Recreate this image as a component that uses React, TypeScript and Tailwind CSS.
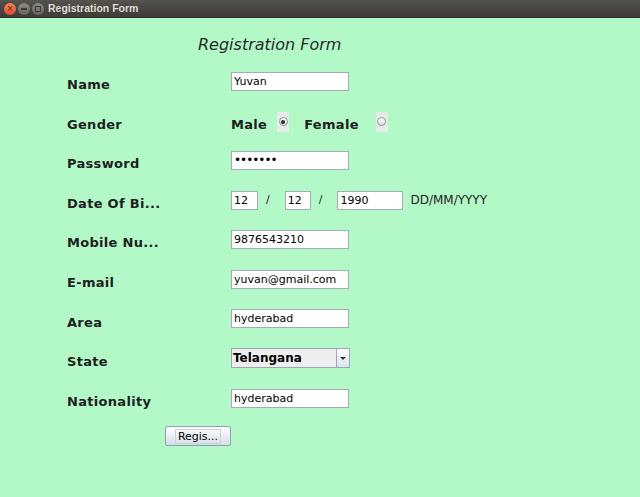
import React from 'react';

const fieldCls =
  'h-[19px] border border-[#a3adb8] bg-white pl-[2px] text-[11px] leading-[17px] text-black';

function Field({ value, w = 'w-[118px]' }: { value: string; w?: string }) {
  return <div className={`${fieldCls} ${w}`}>{value}</div>;
}

function Radio({ checked }: { checked?: boolean }) {
  return (
    <div className="mb-[5px] flex h-[20px] w-[12px] items-center justify-center bg-[#e4ece6]">
      <div className="flex h-[9px] w-[9px] items-center justify-center rounded-full border border-[#8f959c] bg-gradient-to-b from-white to-[#d8dde2]">
        {checked && <div className="h-[4px] w-[4px] rounded-full bg-[#2b2b2b]" />}
      </div>
    </div>
  );
}

function Row({
  label,
  raise = true,
  children,
}: {
  label: string;
  raise?: boolean;
  children: React.ReactNode;
}) {
  return (
    <div className="flex h-[39.6px] items-center">
      <div className="w-[231px] shrink-0 pl-[67px] pt-[2px] text-[13px] font-bold tracking-[0.3px] text-[#1e1e1e]">
        {label}
      </div>
      <div className={raise ? 'mb-[5px] flex items-center' : 'flex items-center pt-[2px]'}>{children}</div>
    </div>
  );
}

export default function App() {
  return (
    <div
      className="flex h-[497px] w-[640px] flex-col overflow-hidden bg-[#b3f9c8]"
      style={{ fontFamily: '"DejaVu Sans", "Liberation Sans", sans-serif' }}
    >
      {/* window title bar */}
      <div className="flex h-[18px] items-center border-b border-[#2e2d2a] bg-gradient-to-b from-[#55534e] to-[#3c3b37]">
        <div className="ml-[4px] flex items-center gap-[2px]">
          <div className="flex h-[12px] w-[12px] items-center justify-center rounded-full bg-gradient-to-b from-[#f7845a] to-[#e0492a] text-[8px] leading-none text-[#5a2010]">
            ×
          </div>
          <div className="flex h-[12px] w-[12px] items-center justify-center rounded-full bg-gradient-to-b from-[#8d8b85] to-[#66645f]">
            <div className="h-[2px] w-[6px] bg-[#3c3b37]" />
          </div>
          <div className="flex h-[12px] w-[12px] items-center justify-center rounded-full bg-gradient-to-b from-[#8d8b85] to-[#66645f]">
            <div className="h-[6px] w-[6px] border border-[#3c3b37]" />
          </div>
        </div>
        <div className="ml-[4px] font-['Liberation_Sans',sans-serif] text-[10.5px] font-bold text-[#dfdbd2]">
          Registration Form
        </div>
      </div>

      <div className="h-[46px] pl-[198px] pt-[18px] text-[16px] italic leading-[18px] text-[#2a2a2a]">
        Registration Form
      </div>

      <div className="flex flex-col">
        <Row label="Name">
          <Field value="Yuvan" />
        </Row>
        <Row label="Gender" raise={false}>
          <span className="text-[13px] font-bold tracking-[0.3px] text-[#1e1e1e]">Male</span>
          <div className="ml-[10px]">
            <Radio checked />
          </div>
          <span className="ml-[15px] text-[13px] font-bold tracking-[0.3px] text-[#1e1e1e]">Female</span>
          <div className="ml-[17px]">
            <Radio />
          </div>
        </Row>
        <Row label="Password">
          <div className={`${fieldCls} w-[118px] text-[12px] tracking-[-1px]`}>•••••••</div>
        </Row>
        <Row label="Date Of Bi...">
          <Field value="12" w="w-[27px]" />
          <span className="ml-[8px] text-[11px] text-[#222]">/</span>
          <div className="ml-[15px]">
            <Field value="12" w="w-[26px]" />
          </div>
          <span className="ml-[8px] text-[11px] text-[#222]">/</span>
          <div className="ml-[15px]">
            <Field value="1990" w="w-[66px]" />
          </div>
          <span className="ml-[7px] text-[12px] text-[#222]">DD/MM/YYYY</span>
        </Row>
        <Row label="Mobile Nu...">
          <Field value="9876543210" />
        </Row>
        <Row label="E-mail">
          <Field value="yuvan@gmail.com" />
        </Row>
        <Row label="Area">
          <Field value="hyderabad" />
        </Row>
        <Row label="State">
          <div className="flex h-[20px] w-[119px] border border-[#9aa6b4] bg-[#eeeeee]">
            <div className="flex-1 pl-[1px] text-[12px] font-bold leading-[18px] text-black">Telangana</div>
            <div className="flex w-[13px] items-center justify-center border-l border-[#9aa6b4] bg-gradient-to-b from-white to-[#dde3ea]">
              <div className="h-0 w-0 border-l-[3px] border-r-[3px] border-t-[3px] border-l-transparent border-r-transparent border-t-[#333]" />
            </div>
          </div>
        </Row>
        <Row label="Nationality">
          <Field value="hyderabad" />
        </Row>
      </div>

      <div className="pl-[165px] pt-[6px]">
        <div className="flex h-[20px] w-[66px] items-center justify-center rounded-[2px] border border-[#8fa0b4] bg-gradient-to-b from-white to-[#d6dde6]">
          <div className="border border-[#c8d0da] px-[2px] text-[11px] leading-[13px] text-black">Regis...</div>
        </div>
      </div>
    </div>
  );
}
